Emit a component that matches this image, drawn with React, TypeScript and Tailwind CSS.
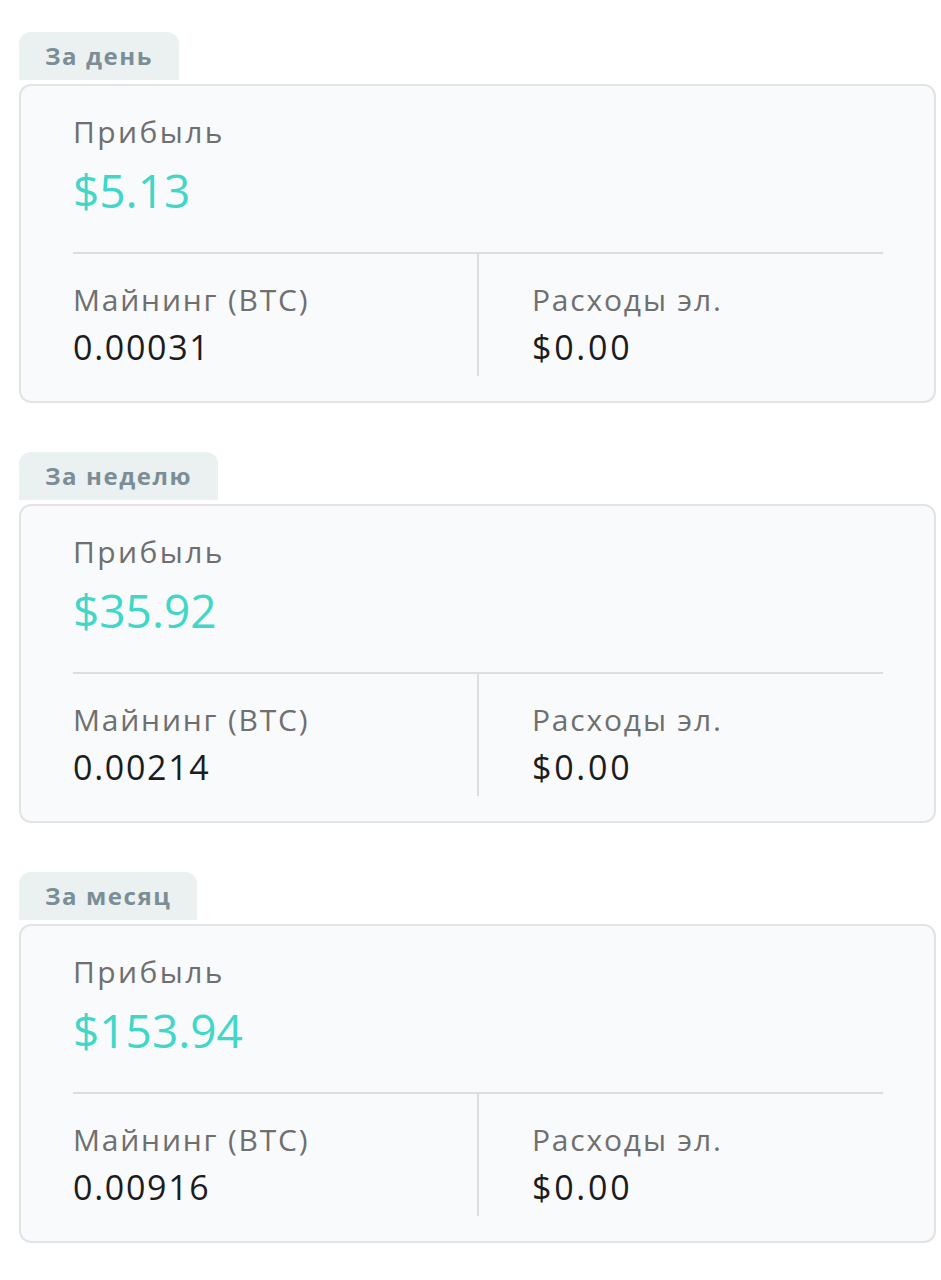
import React from 'react';

type Period = {
  title: string;
  profit: string;
  mined: string;
  power: string;
};

const periods: Period[] = [
  { title: 'За день', profit: '$5.13', mined: '0.00031', power: '$0.00' },
  { title: 'За неделю', profit: '$35.92', mined: '0.00214', power: '$0.00' },
  { title: 'За месяц', profit: '$153.94', mined: '0.00916', power: '$0.00' },
];

function PeriodCard({ p }: { p: Period }) {
  return (
    <section>
      <div className="inline-flex h-[48px] items-center rounded-t-[12px] bg-[#ebf0f1] px-[26px] text-[24px] font-bold tracking-[0.065em] text-[#7b8e96]">
        {p.title}
      </div>
      <div className="mt-[4px] rounded-[12px] border-2 border-[#e1e3e5] bg-[#f9fafb] pl-[52px] pr-[51px] pb-[25px]">
        <div className="border-b-2 border-[#dcdee0] pt-[26px] pb-[32px]">
          <div className="h-[40px] text-[30px] leading-[40px] tracking-[0.08em] text-[#6f6f6f]">Прибыль</div>
          <div className="mt-[8px] h-[60px] text-[46px] leading-[60px] text-[#40d6c9]">{p.profit}</div>
        </div>
        <div className="grid grid-cols-[406px_1fr]">
          <div className="border-r-2 border-[#dcdee0] pt-[26px] pb-[7px]">
            <div className="h-[40px] text-[30px] leading-[40px] tracking-[0.06em] text-[#6f6f6f]">Майнинг (BTC)</div>
            <div className="mt-[5px] h-[44px] text-[34px] leading-[44px] tracking-[0.05em] text-[#1c1c1c]">{p.mined}</div>
          </div>
          <div className="pl-[53px] pt-[26px] pb-[7px]">
            <div className="h-[40px] text-[30px] leading-[40px] tracking-[0.06em] text-[#6f6f6f]">Расходы эл.</div>
            <div className="mt-[5px] h-[44px] text-[34px] leading-[44px] tracking-[0.08em] text-[#1c1c1c]">{p.power}</div>
          </div>
        </div>
      </div>
    </section>
  );
}

export default function App() {
  return (
    <div
      className="min-h-screen bg-white pl-[19px] pr-[5px] pt-[32px]"
      style={{ fontFamily: '"Open Sans", "Noto Sans", sans-serif' }}
    >
      <div className="flex flex-col gap-[49px]">
        {periods.map((p) => (
          <PeriodCard key={p.title} p={p} />
        ))}
      </div>
    </div>
  );
}
